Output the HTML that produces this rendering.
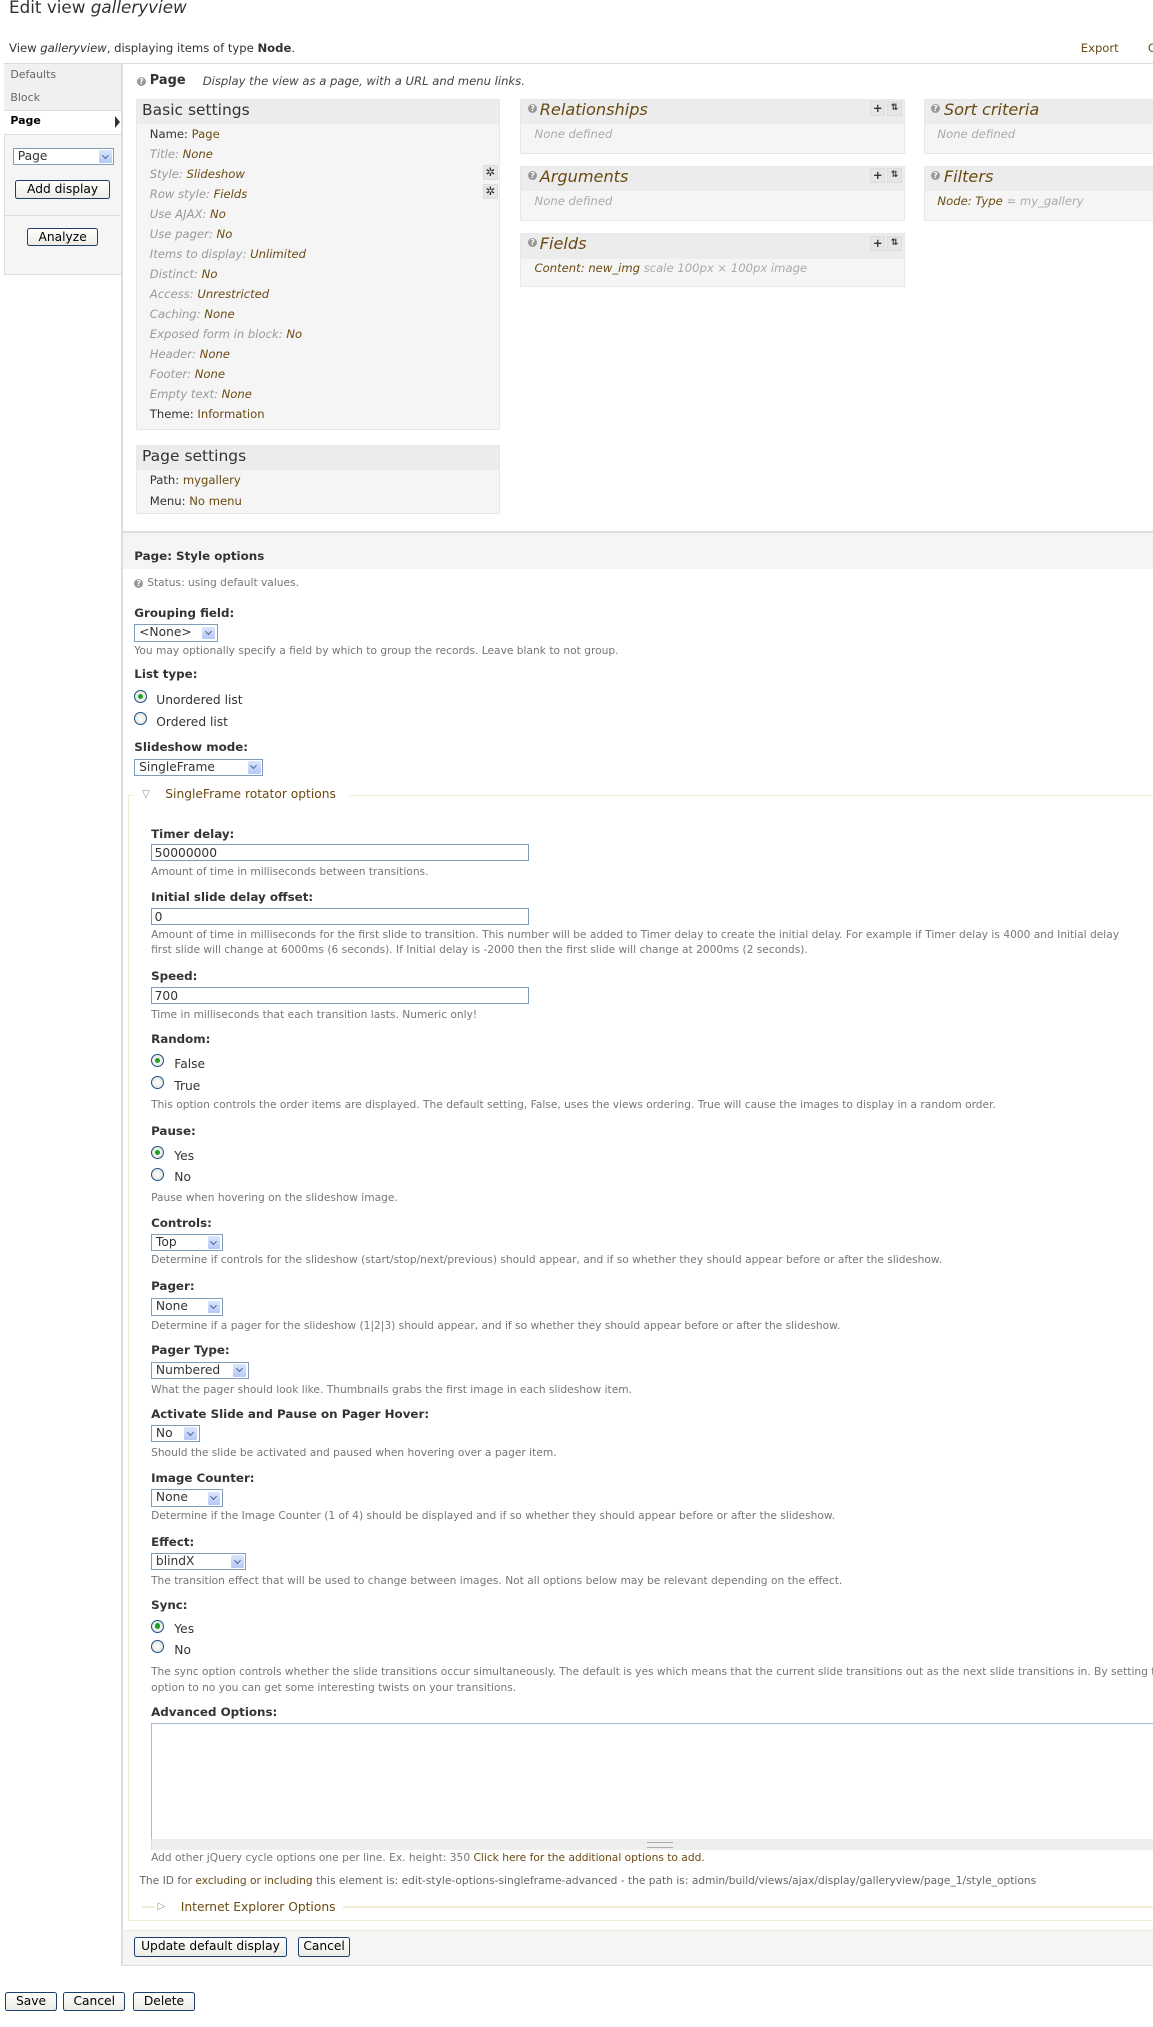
<!DOCTYPE html>
<html><head><meta charset="utf-8"><style>
html{zoom:1.2912}
body{margin:0;width:893px;height:1568px;position:relative;overflow:hidden;background:#fff;font-family:"DejaVu Sans","Liberation Sans",sans-serif;color:#333}
#w{position:absolute;left:0;top:1.5px;width:893px;height:1568px}
.a{position:absolute;white-space:nowrap}
.L{position:absolute;white-space:nowrap;font-weight:bold;font-size:9.2px;color:#333;line-height:12px}
.D{position:absolute;white-space:nowrap;font-size:8.25px;color:#777;line-height:10px}
.V{position:absolute;white-space:nowrap;font-size:9.5px;color:#333;line-height:12px}
.br{color:#6b4a12}
.sel{position:absolute;height:12px;border:1px solid #7f9db9;background:#fff;font-size:9.5px;line-height:12px;padding-left:3px;box-sizing:content-box}
.sel i{position:absolute;right:1px;top:1px;width:10px;height:10px;background:linear-gradient(#dbe6fd,#b5c9f7);border-radius:1px}
.sel i:after{content:"";position:absolute;left:3px;top:2px;width:3px;height:3px;border-right:1.5px solid #4d6185;border-bottom:1.5px solid #4d6185;transform:rotate(45deg)}
.inp{position:absolute;height:13px;border:1px solid #7f9db9;background:#fff;font-size:9.5px;line-height:13px;padding-left:2px;box-sizing:border-box}
.rad{position:absolute;width:10px;height:10px;border:1px solid #1c5180;border-radius:50%;background:radial-gradient(#fff,#dcdcd6);box-sizing:border-box}
.rad.on:after{content:"";position:absolute;left:2px;top:2px;width:4px;height:4px;border-radius:50%;background:#21a121}
.btn{position:absolute;height:14px;border:1px solid #1c3f6e;border-radius:2px;background:linear-gradient(#fff,#ecebe6);font-size:9.5px;line-height:13px;text-align:center;box-sizing:border-box;color:#000}
.box{position:absolute;background:#f5f5f5;border:1px solid #e8e8e8}
.box .h{position:absolute;left:0;right:0;top:0;height:19px;background:#ececec}
.ht{position:absolute;white-space:nowrap;font-size:12.5px;font-style:italic;color:#6b4a12}
.q{position:absolute;width:7px;height:7px;border-radius:50%;background:#999;color:#fff;font-size:6px;line-height:7px;text-align:center;font-weight:bold}
.row{position:absolute;white-space:nowrap;font-size:9px;line-height:12px}
.row em{color:#999}
.row b{font-weight:normal;font-style:italic;color:#6b4a12}
.ic{position:absolute;width:10px;height:10px;background:#e6e6e6;border:1px solid #ddd;font-size:9px;line-height:10px;text-align:center;color:#333;font-weight:bold}
</style></head><body><div id="w">

<div class="a" style="left:7px;top:-4px;font-size:13px;color:#333">Edit view <i>galleryview</i></div>
<div class="a" style="left:7px;top:30px;font-size:9px;color:#333">View <i>galleryview</i>, displaying items of type <b>Node</b>.</div>
<div class="a br" style="left:837px;top:30px;font-size:9px">Export</div>
<div class="a br" style="left:889px;top:30px;font-size:9px">C</div>
<div class="a" style="left:3px;right:0;top:47px;height:1px;background:#d5dcdc"></div>

<div class="a" style="left:3px;top:48px;width:91px;height:18px;background:#f0f0f0;border-bottom:1px solid #ddd"></div>
<div class="a" style="left:8px;top:51px;font-size:8.5px;color:#666">Defaults</div>
<div class="a" style="left:3px;top:66px;width:91px;height:18px;background:#f0f0f0;border-bottom:1px solid #ddd"></div>
<div class="a" style="left:8px;top:69px;font-size:8.5px;color:#666">Block</div>
<div class="a" style="left:8px;top:87px;font-size:8.5px;font-weight:bold;color:#000">Page</div>
<div class="a" style="left:89px;top:88px;width:0;height:0;border-left:4px solid #333;border-top:5px solid transparent;border-bottom:5px solid transparent"></div>
<div class="a" style="left:3px;top:102px;width:90px;height:108px;background:#f5f5f5;border:1px solid #ddd;border-right:none"></div>
<div class="a" style="left:3px;top:165px;width:90px;height:1px;background:#ddd"></div>
<div class="sel" style="left:10px;top:113px;width:74px">Page<i></i></div>
<div class="btn" style="left:12px;top:138px;width:73px;height:15px">Add display</div>
<div class="btn" style="left:21px;top:175px;width:55px">Analyze</div>
<div class="a" style="left:94px;top:47px;width:1px;height:1474px;background:#ddd"></div>

<div class="q" style="left:106px;top:58px">?</div>
<div class="a" style="left:116px;top:55px;font-size:10px;font-weight:bold;color:#333">Page</div>
<div class="a" style="left:157px;top:56px;font-size:9px;font-style:italic;color:#444">Display the view as a page, with a URL and menu links.</div>

<div class="box" style="left:105px;top:75px;width:281px;height:255px"><div class="h"></div></div>
<div class="a" style="left:110px;top:77px;font-size:12px;color:#333">Basic settings</div>
<div class="row" style="left:116px;top:97px">Name: <span class="br">Page</span></div>
<div class="row" style="left:116px;top:112px"><em><i>Title:</i></em> <b>None</b></div>
<div class="row" style="left:116px;top:128px"><em><i>Style:</i></em> <b>Slideshow</b></div>
<div class="row" style="left:116px;top:143px"><em><i>Row style:</i></em> <b>Fields</b></div>
<div class="row" style="left:116px;top:159px"><em><i>Use AJAX:</i></em> <b>No</b></div>
<div class="row" style="left:116px;top:174px"><em><i>Use pager:</i></em> <b>No</b></div>
<div class="row" style="left:116px;top:190px"><em><i>Items to display:</i></em> <b>Unlimited</b></div>
<div class="row" style="left:116px;top:205px"><em><i>Distinct:</i></em> <b>No</b></div>
<div class="row" style="left:116px;top:221px"><em><i>Access:</i></em> <b>Unrestricted</b></div>
<div class="row" style="left:116px;top:236px"><em><i>Caching:</i></em> <b>None</b></div>
<div class="row" style="left:116px;top:252px"><em><i>Exposed form in block:</i></em> <b>No</b></div>
<div class="row" style="left:116px;top:267px"><em><i>Header:</i></em> <b>None</b></div>
<div class="row" style="left:116px;top:283px"><em><i>Footer:</i></em> <b>None</b></div>
<div class="row" style="left:116px;top:298px"><em><i>Empty text:</i></em> <b>None</b></div>
<div class="row" style="left:116px;top:314px">Theme: <span class="br">Information</span></div>
<div class="ic" style="left:374px;top:126px">✲</div>
<div class="ic" style="left:374px;top:141px">✲</div>

<div class="box" style="left:105px;top:343px;width:281px;height:52px"><div class="h"></div></div>
<div class="a" style="left:110px;top:345px;font-size:12px;color:#333">Page settings</div>
<div class="row" style="left:116px;top:365px">Path: <span class="br">mygallery</span></div>
<div class="row" style="left:116px;top:381px">Menu: <span class="br">No menu</span></div>

<div class="box" style="left:403px;top:75px;width:296px;height:41px"><div class="h"></div></div>
<div class="q" style="left:409px;top:79px">?</div>
<div class="ht" style="left:418px;top:76px">Relationships</div>
<div class="ic" style="left:674px;top:77px">+</div><div class="ic" style="left:687px;top:77px;font-size:7px">⇅</div>
<div class="row" style="left:414px;top:97px;color:#aaa;font-style:italic">None defined</div>

<div class="box" style="left:403px;top:127px;width:296px;height:41px"><div class="h"></div></div>
<div class="q" style="left:409px;top:131px">?</div>
<div class="ht" style="left:418px;top:128px">Arguments</div>
<div class="ic" style="left:674px;top:129px">+</div><div class="ic" style="left:687px;top:129px;font-size:7px">⇅</div>
<div class="row" style="left:414px;top:149px;color:#aaa;font-style:italic">None defined</div>

<div class="box" style="left:403px;top:179px;width:296px;height:40px"><div class="h"></div></div>
<div class="q" style="left:409px;top:183px">?</div>
<div class="ht" style="left:418px;top:180px">Fields</div>
<div class="ic" style="left:674px;top:181px">+</div><div class="ic" style="left:687px;top:181px;font-size:7px">⇅</div>
<div class="row" style="left:414px;top:201px;font-style:italic"><span class="br">Content: new_img</span> <span style="color:#aaa">scale 100px × 100px image</span></div>

<div class="box" style="left:716px;top:75px;width:190px;height:41px"><div class="h"></div></div>
<div class="q" style="left:721px;top:79px">?</div>
<div class="ht" style="left:731px;top:76px">Sort criteria</div>
<div class="row" style="left:726px;top:97px;color:#aaa;font-style:italic">None defined</div>

<div class="box" style="left:716px;top:127px;width:190px;height:41px"><div class="h"></div></div>
<div class="q" style="left:721px;top:131px">?</div>
<div class="ht" style="left:731px;top:128px">Filters</div>
<div class="row" style="left:726px;top:149px;font-style:italic"><span class="br">Node: Type</span> <span style="color:#aaa">= my_gallery</span></div>

<div class="a" style="left:95px;right:0;top:410px;height:1px;background:#ddd"></div>
<div class="a" style="left:95px;right:0;top:411px;height:28px;background:#f5f5f5"></div>
<div class="L" style="left:104px;top:424px">Page: Style options</div>
<div class="q" style="left:104px;top:447px">?</div>
<div class="D" style="left:114px;top:445px">Status: using default values.</div>

<div class="L" style="left:104px;top:468px">Grouping field:</div>
<div class="sel" style="left:104px;top:482px;width:60px">&lt;None&gt;<i></i></div>
<div class="D" style="left:104px;top:498px">You may optionally specify a field by which to group the records. Leave blank to not group.</div>
<div class="L" style="left:104px;top:515px">List type:</div>
<div class="rad on" style="left:104px;top:533px"></div><div class="V" style="left:121px;top:535px">Unordered list</div>
<div class="rad" style="left:104px;top:550px"></div><div class="V" style="left:121px;top:552px">Ordered list</div>
<div class="L" style="left:104px;top:572px">Slideshow mode:</div>
<div class="sel" style="left:104px;top:586px;width:95px">SingleFrame<i></i></div>

<div class="a" style="left:99px;right:0;top:614px;height:871px;border:1px solid #f1ebd6;border-right:none"></div>
<div class="a" style="left:104px;top:608px;width:166px;height:12px;background:#fff"></div>
<div class="a" style="left:110px;top:609px;font-size:8px;color:#999">▽</div>
<div class="a br" style="left:128px;top:608px;font-size:9.5px">SingleFrame rotator options</div>

<div class="L" style="left:117px;top:639px">Timer delay:</div>
<div class="inp" style="left:117px;top:652px;width:293px">50000000</div>
<div class="D" style="left:117px;top:669px">Amount of time in milliseconds between transitions.</div>
<div class="L" style="left:117px;top:688px">Initial slide delay offset:</div>
<div class="inp" style="left:117px;top:702px;width:293px">0</div>
<div class="D" style="left:117px;top:718px">Amount of time in milliseconds for the first slide to transition. This number will be added to Timer delay to create the initial delay. For example if Timer delay is 4000 and Initial delay</div>
<div class="D" style="left:117px;top:730px">first slide will change at 6000ms (6 seconds). If Initial delay is -2000 then the first slide will change at 2000ms (2 seconds).</div>
<div class="L" style="left:117px;top:749px">Speed:</div>
<div class="inp" style="left:117px;top:763px;width:293px">700</div>
<div class="D" style="left:117px;top:780px">Time in milliseconds that each transition lasts. Numeric only!</div>

<div class="L" style="left:117px;top:798px">Random:</div>
<div class="rad on" style="left:117px;top:815px"></div><div class="V" style="left:135px;top:817px">False</div>
<div class="rad" style="left:117px;top:832px"></div><div class="V" style="left:135px;top:834px">True</div>
<div class="D" style="left:117px;top:850px">This option controls the order items are displayed. The default setting, False, uses the views ordering. True will cause the images to display in a random order.</div>

<div class="L" style="left:117px;top:869px">Pause:</div>
<div class="rad on" style="left:117px;top:886px"></div><div class="V" style="left:135px;top:888px">Yes</div>
<div class="rad" style="left:117px;top:903px"></div><div class="V" style="left:135px;top:905px">No</div>
<div class="D" style="left:117px;top:922px">Pause when hovering on the slideshow image.</div>

<div class="L" style="left:117px;top:940px">Controls:</div>
<div class="sel" style="left:117px;top:954px;width:51px">Top<i></i></div>
<div class="D" style="left:117px;top:970px">Determine if controls for the slideshow (start/stop/next/previous) should appear, and if so whether they should appear before or after the slideshow.</div>

<div class="L" style="left:117px;top:989px">Pager:</div>
<div class="sel" style="left:117px;top:1004px;width:51px">None<i></i></div>
<div class="D" style="left:117px;top:1021px">Determine if a pager for the slideshow (1|2|3) should appear, and if so whether they should appear before or after the slideshow.</div>

<div class="L" style="left:117px;top:1039px">Pager Type:</div>
<div class="sel" style="left:117px;top:1053px;width:71px">Numbered<i></i></div>
<div class="D" style="left:117px;top:1070px">What the pager should look like. Thumbnails grabs the first image in each slideshow item.</div>

<div class="L" style="left:117px;top:1088px">Activate Slide and Pause on Pager Hover:</div>
<div class="sel" style="left:117px;top:1102px;width:33px">No<i></i></div>
<div class="D" style="left:117px;top:1119px">Should the slide be activated and paused when hovering over a pager item.</div>

<div class="L" style="left:117px;top:1138px">Image Counter:</div>
<div class="sel" style="left:117px;top:1152px;width:51px">None<i></i></div>
<div class="D" style="left:117px;top:1168px">Determine if the Image Counter (1 of 4) should be displayed and if so whether they should appear before or after the slideshow.</div>

<div class="L" style="left:117px;top:1187px">Effect:</div>
<div class="sel" style="left:117px;top:1201px;width:69px">blindX<i></i></div>
<div class="D" style="left:117px;top:1218px">The transition effect that will be used to change between images. Not all options below may be relevant depending on the effect.</div>

<div class="L" style="left:117px;top:1236px">Sync:</div>
<div class="rad on" style="left:117px;top:1253px"></div><div class="V" style="left:135px;top:1255px">Yes</div>
<div class="rad" style="left:117px;top:1269px"></div><div class="V" style="left:135px;top:1271px">No</div>
<div class="D" style="left:117px;top:1289px">The sync option controls whether the slide transitions occur simultaneously. The default is yes which means that the current slide transitions out as the next slide transitions in. By setting this</div>
<div class="D" style="left:117px;top:1301px">option to no you can get some interesting twists on your transitions.</div>

<div class="L" style="left:117px;top:1319px">Advanced Options:</div>
<div class="a" style="left:117px;right:0;top:1333px;height:89px;border:1px solid #a5bcd6;border-right:none;background:#fff"></div>
<div class="a" style="left:117px;right:0;top:1423px;height:8px;background:#eee;border-left:1px solid #ddd"></div>
<div class="a" style="left:501px;top:1425px;width:20px;height:3px;border-top:1px solid #aaa;border-bottom:1px solid #aaa"></div>
<div class="D" style="left:117px;top:1433px">Add other jQuery cycle options one per line. Ex. height: 350 <span class="br">Click here for the additional options to add.</span></div>
<div class="D" style="left:108px;top:1451px;color:#666">The ID for <span class="br">excluding or including</span> this element is: edit-style-options-singleframe-advanced - the path is: admin/build/views/ajax/display/galleryview/page_1/style_options</div>

<div class="a" style="left:110px;right:0;top:1475px;height:1px;background:#f1ebd6"></div>
<div class="a" style="left:120px;top:1469px;width:146px;height:12px;background:#fff"></div>
<div class="a" style="left:122px;top:1470px;font-size:8px;color:#999">▷</div>
<div class="a br" style="left:140px;top:1470px;font-size:9.5px">Internet Explorer Options</div>

<div class="a" style="left:95px;right:0;top:1493px;height:27px;background:#f5f5f5;border-top:1px solid #f0ebda"></div>
<div class="a" style="left:95px;right:0;top:1520px;height:1px;background:#ddd"></div>
<div class="btn" style="left:104px;top:1499px;width:118px;height:15px">Update default display</div>
<div class="btn" style="left:231px;top:1499px;width:40px;height:15px">Cancel</div>

<div class="btn" style="left:4px;top:1541px;width:40px;height:15px">Save</div>
<div class="btn" style="left:49px;top:1541px;width:48px;height:15px">Cancel</div>
<div class="btn" style="left:103px;top:1541px;width:48px;height:15px">Delete</div>
</div></body></html>
